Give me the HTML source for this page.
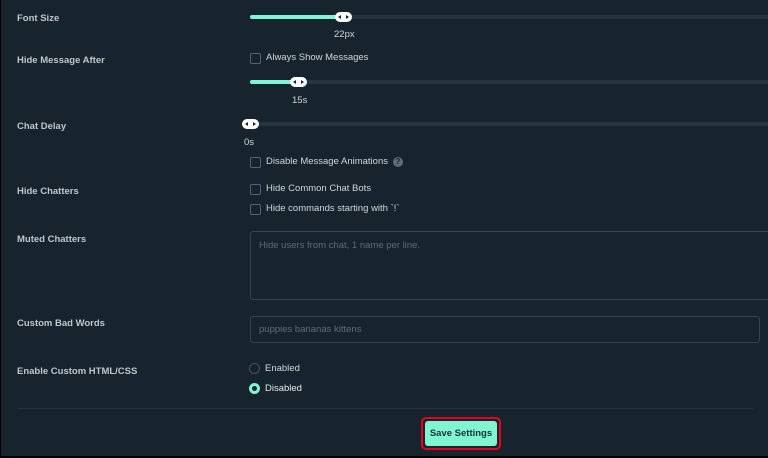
<!DOCTYPE html>
<html><head><style>
body{margin:0;width:768px;height:458px;overflow:hidden;background:#000;font-family:"Liberation Sans",sans-serif;}
#p{position:absolute;left:1px;top:0;width:767px;height:456px;background:#17242d;}
.a{position:absolute;white-space:nowrap}
.lbl{font-size:9.5px;color:#bfc6cc;font-weight:bold;left:16px}
.t{font-size:9.5px;color:#d0d6da}
.trk{position:absolute;height:4px;border-radius:2px;background:#253540}
.fill{position:absolute;height:4px;border-radius:2px;background:#80f5d2}
.th{position:absolute;width:17px;height:10px;border-radius:5px;background:#fff}
.th:before,.th:after{content:"";position:absolute;top:3px;border:2px solid transparent}
.th:before{left:3px;border-right:3px solid #17242d;border-left:0}
.th:after{right:3px;border-left:3px solid #17242d;border-right:0}
.cb{position:absolute;width:9px;height:9px;border:1px solid #55636c;border-radius:2px}
.box{position:absolute;border:1px solid #35444e;border-radius:3px;font-size:9.5px;color:#5f6c75}
</style></head><body><div id="p">
<div class="a lbl" style="top:13px">Font Size</div>
<div class="trk" style="left:249px;top:15px;width:520px"></div>
<div class="fill" style="left:249px;top:15px;width:92px"></div>
<div class="th" style="left:334px;top:12px"></div>
<div class="a t" style="left:333px;top:29px">22px</div>

<div class="a lbl" style="top:55px">Hide Message After</div>
<div class="cb" style="left:249px;top:53px"></div>
<div class="a t" style="left:265px;top:52px">Always Show Messages</div>
<div class="trk" style="left:249px;top:80px;width:520px"></div>
<div class="fill" style="left:249px;top:80px;width:45px"></div>
<div class="th" style="left:289px;top:77px"></div>
<div class="a t" style="left:291px;top:95px">15s</div>

<div class="a lbl" style="top:121px">Chat Delay</div>
<div class="trk" style="left:249px;top:122px;width:520px"></div>
<div class="th" style="left:241px;top:119px"></div>
<div class="a t" style="left:243px;top:137px">0s</div>
<div class="cb" style="left:249px;top:157px"></div>
<div class="a t" style="left:265px;top:156px">Disable Message Animations</div>
<div class="a" style="left:392px;top:157px;width:10px;height:10px;border-radius:50%;background:#5f6c75;color:#17242d;font-size:8px;font-weight:bold;text-align:center;line-height:10px">?</div>

<div class="a lbl" style="top:186px">Hide Chatters</div>
<div class="cb" style="left:249px;top:184px"></div>
<div class="a t" style="left:265px;top:183px">Hide Common Chat Bots</div>
<div class="cb" style="left:249px;top:204px"></div>
<div class="a t" style="left:265px;top:203px">Hide commands starting with `!`</div>

<div class="a lbl" style="top:234px">Muted Chatters</div>
<div class="box" style="left:249px;top:231px;width:520px;height:67px"><div style="padding:8px 0 0 8px">Hide users from chat, 1 name per line.</div></div>

<div class="a lbl" style="top:318px">Custom Bad Words</div>
<div class="box" style="left:249px;top:316px;width:508px;height:25px"><div style="padding:7px 0 0 8px">puppies bananas kittens</div></div>

<div class="a lbl" style="top:366px">Enable Custom HTML/CSS</div>
<div class="a" style="left:248px;top:363px;width:9px;height:9px;border:1px solid #45535c;border-radius:50%"></div>
<div class="a t" style="left:264px;top:363px">Enabled</div>
<div class="a" style="left:248px;top:383px;width:5px;height:5px;border:3px solid #80f5d2;border-radius:50%;background:#17242d"></div>
<div class="a t" style="left:264px;top:383px;color:#e6eaec">Disabled</div>

<div class="a" style="left:16px;top:408px;width:736px;height:1px;background:#24333d"></div>
<div class="a" style="left:420px;top:417px;width:76px;height:29px;border:2px solid #e8001c;border-radius:5px;background:#17242d"></div>
<div class="a" style="left:424px;top:421px;width:72px;height:25px;background:#80f5d2;border-radius:3px;font-size:9.5px;color:#17323a;text-align:center;line-height:25px;font-weight:bold">Save Settings</div>
</div></body></html>
